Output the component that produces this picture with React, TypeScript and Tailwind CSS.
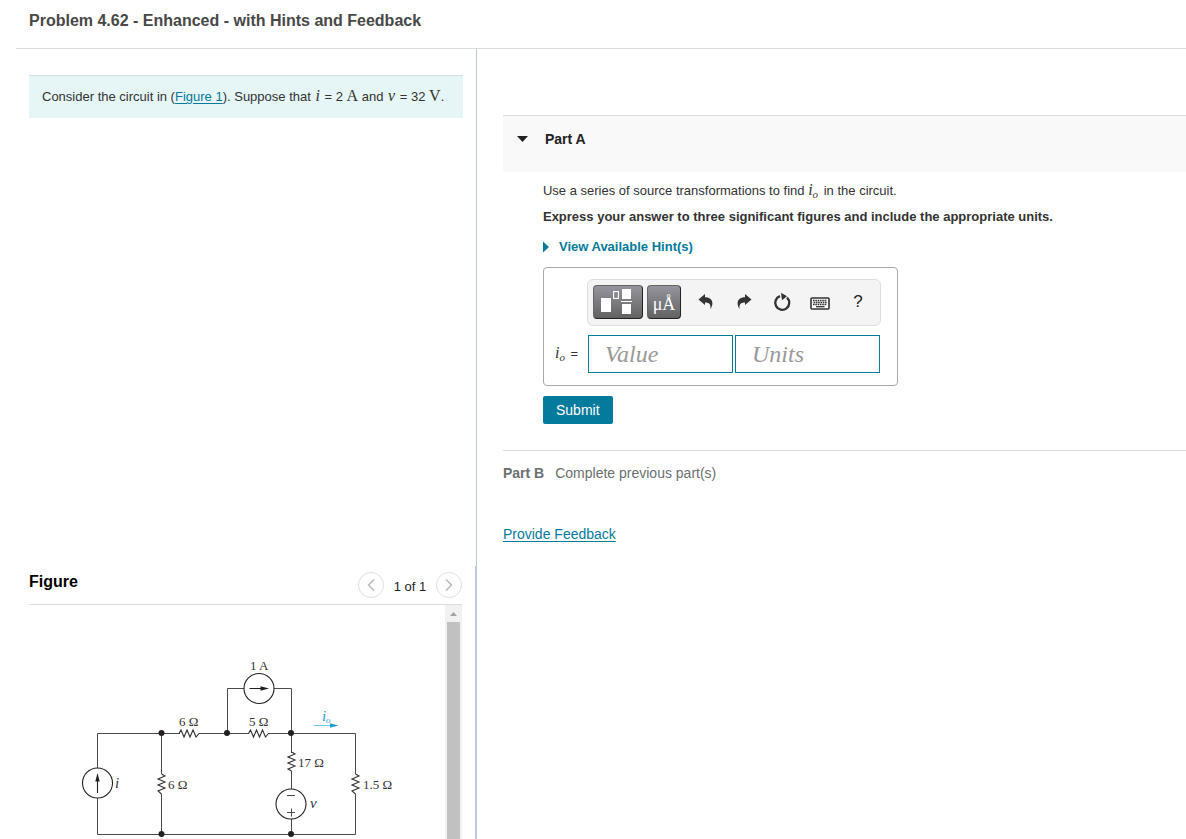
import { useState } from 'react';
import type { ReactNode } from 'react';
import { ChevronLeft, ChevronRight } from 'lucide-react';

interface MathProps {
  children: ReactNode;
}

const MathVar = ({ children }: MathProps) => (
  <i className="mx-px font-['Liberation_Serif',serif] text-base leading-none">{children}</i>
);

const MathUnit = ({ children }: MathProps) => (
  <span className="font-['Liberation_Serif',serif] text-base leading-none">{children}</span>
);

const OutputCurrent = () => (
  <span className="mr-0.5 font-['Liberation_Serif',serif] text-base leading-none italic">
    i<sub className="text-[11px]">o</sub>
  </span>
);

const tools = [
  {
    label: 'Undo',
    icon: (
      <path
        d="M2.500 7.500 9 2v3.200c4.800 0 7.600 2.600 7.400 6.300-.1 2-.7 3.800-2 5.500.6-4.400-.9-6.400-5.400-6.400V13z"
        fill="#333"
      />
    ),
  },
  {
    label: 'Redo',
    icon: (
      <path
        d="M17.500 7.500 11 2v3.200c-4.800 0-7.600 2.600-7.400 6.300.1 2 .7 3.800 2 5.500-.6-4.400.9-6.400 5.400-6.400V13z"
        fill="#333"
      />
    ),
  },
  {
    label: 'Reset',
    icon: (
      <>
        <path d="M15 5.700A7 7 0 1 1 8 4.200" fill="none" stroke="#333" strokeWidth="2.3" />
        <path d="M9 0.800l6 3.400-5 4z" fill="#333" />
      </>
    ),
  },
  {
    label: 'Keyboard shortcuts',
    icon: (
      <>
        <rect x="1" y="6" width="18" height="11" rx="1" fill="#fff" stroke="#333" strokeWidth="1.6" />
        <path
          d="M3 8.500h14M3.600 10.500h13M3 12.500h14"
          stroke="#333"
          strokeWidth="1.3"
          strokeDasharray="1.6 .7"
        />
        <path d="M6 14.700h8.500" stroke="#333" strokeWidth="1.3" />
      </>
    ),
  },
];

const AnswerToolbar = () => (
  <div className="flex items-center rounded-md border border-[#dedede] bg-[#f4f4f4] pt-[5px] pr-[3px] pb-1.5 pl-[5px]">
    <button
      type="button"
      aria-label="Templates"
      className="flex h-[34px] w-[50px] items-center justify-center rounded border border-r-[#222] border-b-[#222] border-[#666] bg-gradient-to-b from-[#96949e] to-[#626262]"
    >
      <svg width="34" height="26" viewBox="0 0 34 26">
        <rect x="0" y="9" width="10" height="14" fill="#fff" />
        <rect x="12.6" y="2.600" width="4.800" height="6.800" fill="none" stroke="#fff" strokeWidth="1.1" />
        <rect x="21" y="0" width="9" height="10" fill="#fff" />
        <path d="M20 12.500h11" stroke="#fff" />
        <rect x="21" y="15" width="9" height="10" fill="#fff" />
      </svg>
    </button>
    <button
      type="button"
      className="ml-1 h-[34px] w-[34px] rounded border border-r-[#222] border-b-[#222] border-[#666] bg-gradient-to-b from-[#96949e] to-[#626262] pt-0.5 font-['Liberation_Serif',serif] text-lg leading-8 text-white"
    >
      μÅ
    </button>
    <div className="ml-1.5 flex">
      {tools.map((tool) => (
        <button
          key={tool.label}
          type="button"
          aria-label={tool.label}
          className="flex h-[34px] w-[38px] items-center justify-center"
        >
          <svg width="20" height="20" viewBox="0 0 20 20">
            {tool.icon}
          </svg>
        </button>
      ))}
      <button type="button" className="h-[34px] w-[38px] text-[17px] text-[#222]">
        ?
      </button>
    </div>
  </div>
);

const Circuit = () => (
  <svg width="416" height="240" viewBox="29 605 416 240" className="block shrink-0">
    <g fill="none" stroke="#4a4a4a" strokeWidth="1">
      <path d="M97.500 768V733.500H180M199 733.500H249M268 733.500H355.500V774M355.500 794V834.500H97.500V798" />
      <path d="M161.500 733V774M161.500 794V834M227.500 733V688.500H244M274 688.500H291.500V753M291.500 771V789M291.500 819V834" />
      <path d="M287 795.500h8M287 812.500h8M291.500 808.500v8" />
    </g>
    <g fill="none" stroke="#333" strokeWidth="1.1">
      <path d="M179 733.500l2-3.500 3 7 3-7 3 7 3-7 3 7 3-3.500" />
      <path d="M248.500 733.500l2-3.500 3 7 3-7 3 7 3-7 3 7 3-3.500" />
      <path d="M161.500 774l3.500 2-7 3 7 3-7 3 7 3-7 3 3.500 3" />
      <path d="M355.500 774l3.500 2-7 3 7 3-7 3 7 3-7 3 3.500 3" />
      <path d="M291.500 752l3.500 2-7 3 7 3-7 3 7 3-7 3 3.500 2" />
    </g>
    <g fill="none" stroke="#231f20" strokeWidth="1.1">
      <circle cx="97.5" cy="783" r="15" />
      <circle cx="259" cy="688.5" r="15" />
      <circle cx="291" cy="804" r="15" />
      <path d="M97.500 793v-14M249.500 688.500h14" />
    </g>
    <g fill="#231f20">
      <path d="M97.500 773l2.200 8.500h-4.400zM269 688.500l-8.500-2.200v4.400z" />
      <circle cx="161.5" cy="733" r="3" />
      <circle cx="227" cy="733" r="3" />
      <circle cx="291" cy="733" r="3" />
      <circle cx="161.5" cy="834" r="3" />
      <circle cx="291" cy="834" r="3" />
    </g>
    <path d="M314 725.500h18" stroke="#6fc8e6" />
    <path d="M338.500 725.500l-8.500-2.200v4.400z" fill="#1a9fd0" />
    <g fill="#333" className="font-['Liberation_Serif',serif] text-[13px]">
      <text x="250" y="670">1 A</text>
      <text x="179" y="726">6 Ω</text>
      <text x="249" y="726">5 Ω</text>
      <text x="168" y="789">6 Ω</text>
      <text x="298" y="767">17 Ω</text>
      <text x="363" y="789">1.5 Ω</text>
      <text x="115" y="788" className="text-[15px] italic">i</text>
      <text x="310" y="808" className="text-[15px] italic">v</text>
    </g>
    <g fill="#1a9fd0" className="font-['Liberation_Serif',serif] italic">
      <text x="322" y="721" className="text-[15px]">i</text>
      <text x="326" y="723" className="text-[9px]">o</text>
    </g>
  </svg>
);

const FigurePanel = () => (
  <section
    id="figure"
    className="flex h-[273px] shrink-0 flex-col border-r-2 border-[#b8cbe0] px-[13px]"
  >
    <div className="flex h-[39px] shrink-0 items-center justify-between border-b border-[#dcdcdc]">
      <h2 className="pb-1.5 text-base font-bold text-black">Figure</h2>
      <div className="flex items-center text-[13px] text-[#222]">
        <button
          type="button"
          aria-label="Previous figure"
          className="flex h-[26px] w-[26px] items-center justify-center rounded-full border border-[#e0e0e0] text-[#bbb]"
        >
          <ChevronLeft className="h-5 w-5" />
        </button>
        <span className="w-[52px] pt-1 text-center">1 of 1</span>
        <button
          type="button"
          aria-label="Next figure"
          className="flex h-[26px] w-[26px] items-center justify-center rounded-full border border-[#e0e0e0] text-[#bbb]"
        >
          <ChevronRight className="h-5 w-5" />
        </button>
      </div>
    </div>
    <div className="flex min-h-0 flex-1 justify-between overflow-hidden">
      <Circuit />
      <div className="flex w-[17px] shrink-0 flex-col items-center bg-[#f1f1f1]">
        <svg width="17" height="17" viewBox="0 0 17 17" className="shrink-0">
          <path d="M5 11l3.500-4L12 11z" fill="#a3a3a3" />
        </svg>
        <div className="w-[13px] flex-1 bg-[#c1c1c1]" />
      </div>
    </div>
  </section>
);

const PartA = () => {
  const [value, setValue] = useState('');
  const [units, setUnits] = useState('');

  return (
    <section className="text-[13px] leading-5">
      <button
        type="button"
        className="flex h-[57px] w-full items-start border-t border-[#dcdcdc] bg-[#f9f9f9] pt-3 pl-3.5"
      >
        <svg width="11" height="22" viewBox="0 0 11 22">
          <path d="M0 8h11l-5.500 6z" fill="#222" />
        </svg>
        <span className="ml-[17px] text-sm leading-[22px] font-bold text-[#222]">Part A</span>
      </button>

      <div className="flex flex-col items-start pt-[9px] pl-10">
        <p>
          Use a series of source transformations to find <OutputCurrent /> in the circuit.
        </p>
        <p className="mt-1.5 font-bold">
          Express your answer to three significant figures and include the appropriate units.
        </p>
        <button type="button" className="mt-2.5 flex items-center font-bold text-[#047a9c]">
          <svg width="6" height="12" viewBox="0 0 6 12" className="mr-2.5">
            <path d="M0 0.500l6 5.500-6 5.500z" fill="#047a9c" />
          </svg>
          View Available Hint(s)
        </button>

        {/* Answer box */}
        <div className="mt-2.5 rounded border border-[#a9a9a9] pt-[11px] pr-4 pb-3 pl-[11px]">
          <div className="ml-8">
            <AnswerToolbar />
          </div>
          <div className="mt-[9px] flex items-center">
            <span className="w-[33px]">
              <OutputCurrent /> =
            </span>
            <input
              aria-label="Value"
              placeholder="Value"
              value={value}
              onChange={(e) => setValue(e.target.value)}
              className="h-[38px] w-[145px] border border-[#047a9c] px-4 font-['Liberation_Serif',serif] text-2xl placeholder:text-[#999] placeholder:italic"
            />
            <input
              aria-label="Units"
              placeholder="Units"
              value={units}
              onChange={(e) => setUnits(e.target.value)}
              className="ml-0.5 h-[38px] w-[145px] border border-[#047a9c] px-4 font-['Liberation_Serif',serif] text-2xl placeholder:text-[#999] placeholder:italic"
            />
          </div>
        </div>

        <button
          type="button"
          className="mt-2.5 h-7 rounded-xs bg-[#047a9c] px-[13px] text-sm text-white"
        >
          Submit
        </button>
      </div>
    </section>
  );
};

export default function App() {
  return (
    <div className="flex h-screen flex-col overflow-hidden bg-white pl-4 font-['Liberation_Sans',Arial,sans-serif] text-[#333]">
      <header className="h-[49px] shrink-0 border-b border-[#dcdcdc] pt-[9px] pl-[13px]">
        <h1 className="text-base font-bold text-[#484848]">
          Problem 4.62 - Enhanced - with Hints and Feedback
        </h1>
      </header>

      <main className="flex min-h-0 flex-1">
        <aside className="flex w-[39.4%] shrink-0 flex-col justify-between">
          <div className="flex-1 border-r border-[#b8cbe0] px-[13px] pt-[26px]">
            <p className="border-t border-[#d5dfdf] bg-[#e6f6f6] px-[13px] py-[11px] text-[13px] leading-5 whitespace-nowrap">
              Consider the circuit in (
              <a href="#figure" className="text-[#047a9c] underline underline-offset-2">
                Figure 1
              </a>
              ). Suppose that <MathVar>i</MathVar> = 2 <MathUnit>A</MathUnit> and{' '}
              <MathVar>v</MathVar> = 32 <MathUnit>V</MathUnit>.
            </p>
          </div>
          <FigurePanel />
        </aside>

        <div className="min-w-0 flex-1 pt-[66px] pl-[26px]">
          <PartA />
          <div className="mt-[26px] border-t border-[#dcdcdc] pt-3 text-sm text-[#6a7070]">
            <b className="mr-[11px]">Part B</b>
            Complete previous part(s)
          </div>
          <a
            href="#feedback"
            className="mt-[41px] inline-block text-sm text-[#047a9c] underline underline-offset-2"
          >
            Provide Feedback
          </a>
        </div>
      </main>
    </div>
  );
}
